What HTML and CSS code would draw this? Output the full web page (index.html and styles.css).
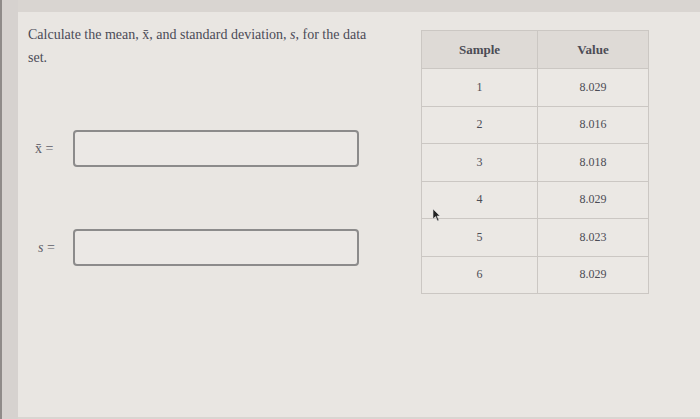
FILE: index.html
```html
<!DOCTYPE html>
<html>
<head>
<meta charset="utf-8">
<link rel="stylesheet" href="styles.css">
</head>
<body>
<div class="screen">
  <div class="edge"></div>
  <div class="panel">
    <div class="question">
      <p class="prompt">Calculate the mean, x̄, and standard deviation, <i>s</i>, for the data set.</p>
      <div class="answer answer-mean">
        <span class="label">x̄ =</span>
        <div class="box"></div>
      </div>
      <div class="answer answer-sd">
        <span class="label"><i>s</i> =</span>
        <div class="box"></div>
      </div>
    </div>
    <div class="data">
      <table class="tbl">
        <thead>
          <tr><th>Sample</th><th>Value</th></tr>
        </thead>
        <tbody>
          <tr><td>1</td><td>8.029</td></tr>
          <tr><td>2</td><td>8.016</td></tr>
          <tr><td>3</td><td>8.018</td></tr>
          <tr><td>4</td><td>8.029</td></tr>
          <tr><td>5</td><td>8.023</td></tr>
          <tr><td>6</td><td>8.029</td></tr>
        </tbody>
      </table>
      <svg class="cursor" width="9" height="14" viewBox="0 0 9 14"><path d="M1 1 L1 11 L3.5 8.5 L5.5 13 L7 12.3 L5 8 L8 8 Z" fill="#222" stroke="#ddd" stroke-width="0.6"/></svg>
    </div>
  </div>
</div>
</body>
</html>
```

FILE: styles.css
```css
html, body {
  margin: 0;
  padding: 0;
  background: #d9d5d1;
}
.screen {
  display: flex;
  width: 700px;
  height: 419px;
  overflow: hidden;
  font-family: "Liberation Serif", "Times New Roman", serif;
  color: #4b4b57;
}
.edge {
  width: 16px;
  flex: none;
  background: #d6d2cf;
  border-left: 2px solid #8f8b89;
}
.panel {
  flex: 1;
  margin-top: 12px;
  margin-bottom: 2px;
  background: #e9e6e2;
  display: flex;
  padding: 0 0 0 10px;
}
.question {
  width: 375px;
  flex: none;
}
.prompt {
  margin: 11px 0 0 0;
  font-size: 14px;
  line-height: 23px;
  width: 345px;
}
.answer {
  display: flex;
  align-items: center;
}
.answer-mean {
  margin-top: 61px;
}
.answer-sd {
  margin-top: 62px;
}
.label {
  width: 45px;
  flex: none;
  padding-left: 7px;
  box-sizing: border-box;
  font-size: 14px;
  color: #5e5e68;
}
.answer-sd .label {
  padding-left: 10px;
}
.box {
  width: 282px;
  height: 33px;
  border: 2px solid #8c8b8b;
  border-radius: 4px;
  background: #ebe8e5;
}
.data {
  position: relative;
  padding-left: 18px;
  padding-top: 18px;
}
.tbl {
  border-collapse: collapse;
  font-size: 12px;
  color: #4c4c55;
}
.tbl th, .tbl td {
  border: 1px solid #cbc7c3;
  text-align: center;
  height: 36.5px;
  padding: 0;
}
.tbl th {
  background: #dedad6;
  font-weight: bold;
  font-size: 13px;
  height: 37px;
}
.tbl th:first-child, .tbl td:first-child {
  width: 115px;
}
.tbl th:last-child, .tbl td:last-child {
  width: 110px;
}
.tbl tbody tr {
  background: #ebe8e4;
}
.cursor {
  position: absolute;
  left: 29px;
  top: 196px;
}
```
